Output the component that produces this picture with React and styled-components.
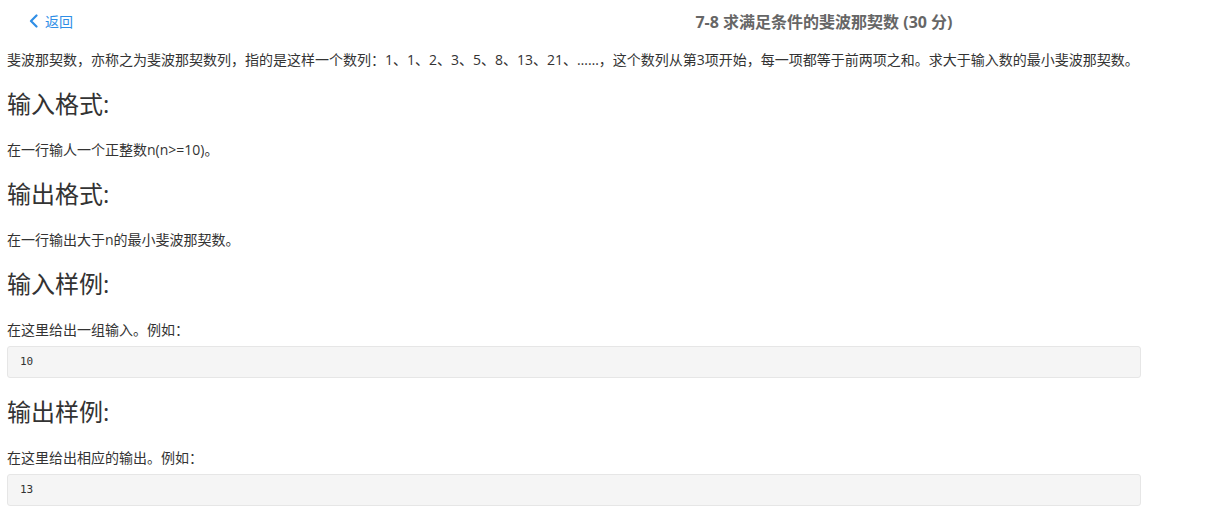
import React from 'react';
import styled, { createGlobalStyle } from 'styled-components';

const GlobalStyle = createGlobalStyle`
  body {
    margin: 0;
    background: #fff;
    font-family: "Open Sans", "Noto Sans CJK SC", sans-serif;
    color: #333;
  }
`;

const Header = styled.div`
  display: flex;
  align-items: center;
  height: 42px;
`;

const Back = styled.a`
  display: flex;
  align-items: center;
  gap: 7px;
  width: 636px;
  padding-left: 29px;
  box-sizing: border-box;
  color: #2f8ee6;
  font-size: 14px;
  text-decoration: none;
  cursor: pointer;
`;

const Title = styled.h2`
  margin: 0;
  flex: 1;
  max-width: 376px;
  text-align: center;
  font-size: 16px;
  font-weight: 700;
  color: #666;
  white-space: nowrap;
`;

const Content = styled.div`
  padding: 0 81px 0 7px;
  font-size: 14px;
  line-height: 20px;
`;

const Para = styled.p`
  margin: ${(p) => p.$top || 8}px 0 0;
  white-space: nowrap;
`;

const Heading = styled.h3`
  margin: 18px 0 0;
  font-size: 24px;
  font-weight: 400;
  line-height: 32px;
  color: #333;
`;

const Code = styled.pre`
  margin: 6px 0 0;
  padding: 0 12px;
  height: 32px;
  line-height: 30px;
  box-sizing: border-box;
  background: #f5f5f5;
  border: 1px solid #e6e6e6;
  border-radius: 3px;
  font-family: "DejaVu Sans Mono", monospace;
  font-size: 11px;
  color: #333;
`;

const Chevron = () => (
  <svg width="9" height="14" viewBox="0 0 9 14">
    <path d="M7.5 1.5 L2 7 L7.5 12.5" fill="none" stroke="currentColor" strokeWidth="2.2" strokeLinecap="round" strokeLinejoin="round" />
  </svg>
);

const sections = [
  { h: '输入格式:', t: '在一行输人一个正整数n(n>=10)。' },
  { h: '输出格式:', t: '在一行输出大于n的最小斐波那契数。' },
  { h: '输入样例:', t: '在这里给出一组输入。例如：', code: '10' },
  { h: '输出样例:', t: '在这里给出相应的输出。例如：', code: '13' },
];

export default function App() {
  return (
    <>
      <GlobalStyle />
      <Header>
        <Back>
          <Chevron />
          返回
        </Back>
        <Title>7-8 求满足条件的斐波那契数 (30 分)</Title>
      </Header>
      <Content>
        <Para $top={8}>
          斐波那契数，亦称之为斐波那契数列，指的是这样一个数列：1、1、2、3、5、8、13、21、……，这个数列从第3项开始，每一项都等于前两项之和。求大于输入数的最小斐波那契数。
        </Para>
        {sections.map((s) => (
          <React.Fragment key={s.h}>
            <Heading>{s.h}</Heading>
            <Para $top={20}>{s.t}</Para>
            {s.code && <Code>{s.code}</Code>}
          </React.Fragment>
        ))}
      </Content>
    </>
  );
}
